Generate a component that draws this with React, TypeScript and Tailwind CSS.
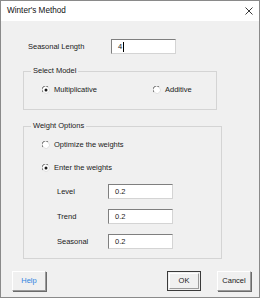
import React from "react";

function Radio({ checked }: { checked: boolean }) {
  return (
    <svg width="8" height="8" viewBox="0 0 8 8" className="shrink-0">
      <circle cx="4" cy="4" r="3.5" fill="#ffffff" />
      <path d="M1 6.2 A3.4 3.4 0 0 1 6.2 1" fill="none" stroke="#6e6e6e" strokeWidth="1" />
      <path d="M6.6 1.8 A3.4 3.4 0 0 1 1.8 6.6" fill="none" stroke="#dedede" strokeWidth="1" />
      {checked && <circle cx="4" cy="4" r="1.5" fill="#1a1a1a" />}
    </svg>
  );
}

function TextBox({ value, width, caret }: { value: string; width: string; caret?: boolean }) {
  return (
    <div
      className={`${width} h-[15px] bg-white border border-t-[#7f7f7f] border-l-[#7f7f7f] border-b-[#d4d4d4] border-r-[#d4d4d4] flex items-center pl-[6px] text-[7.5px] text-[#1a1a1a]`}
    >
      <span>{value}</span>
      {caret && <span className="w-px h-[10px] bg-black ml-[1px]" />}
    </div>
  );
}

function Button({ label, def, blue }: { label: string; def?: boolean; blue?: boolean }) {
  return (
    <div
      className={`w-[34px] h-[20px] flex items-center justify-center text-[7.5px] ${
        def
          ? "border border-[#3a3a3a]"
          : "border border-t-white border-l-white border-b-[#9a9a9a] border-r-[#9a9a9a] shadow-[1px_1px_0_#6b6b6b]"
      } bg-[#f0f0f0] ${blue ? "text-[#2f84e0]" : "text-[#1a1a1a]"}`}
    >
      {def ? (
        <div className="w-[30px] h-[16px] flex items-center justify-center border border-t-white border-l-white border-b-[#9a9a9a] border-r-[#9a9a9a]">
          {label}
        </div>
      ) : (
        label
      )}
    </div>
  );
}

export default function App() {
  return (
    <div
      className="w-[261px] h-[300px] bg-white"
      style={{ fontFamily: '"Liberation Sans", Arial, sans-serif' }}
    >
      <div className="w-[260px] h-[298px] border border-[#8a8a8a] flex flex-col bg-[#f0f0f0]">
        {/* Title bar */}
        <div className="h-[20px] bg-white flex items-center justify-between pl-[6px] pr-[6px]">
          <span className="text-[8.2px] text-[#111]">Winter's Method</span>
          <svg width="8" height="8" viewBox="0 0 8 8">
            <path d="M0.5 0.5 L7.5 7.5 M7.5 0.5 L0.5 7.5" stroke="#222" strokeWidth="0.9" />
          </svg>
        </div>

        {/* Seasonal Length */}
        <div className="mt-[18px] flex items-center pl-[27px]">
          <span className="w-[83px] text-[7.5px] text-[#1a1a1a]">Seasonal Length</span>
          <TextBox value="4" width="w-[65px]" caret />
        </div>

        {/* Select Model */}
        <fieldset className="mt-[12px] ml-[22px] w-[194px] h-[44px] border border-[#d4d4d4] px-0">
          <legend className="ml-[7px] px-[2px] leading-[10px] text-[7.5px] text-[#1a1a1a]">
            Select Model
          </legend>
          <div className="mt-[9px] pl-[18px] flex items-center leading-[10px]">
            <div className="w-[111px] flex items-center gap-[4px]">
              <Radio checked />
              <span className="text-[7.5px] text-[#1a1a1a]">Multiplicative</span>
            </div>
            <div className="flex items-center gap-[4px]">
              <Radio checked={false} />
              <span className="text-[7.5px] text-[#1a1a1a]">Additive</span>
            </div>
          </div>
        </fieldset>

        {/* Weight Options */}
        <fieldset className="mt-[11px] ml-[22px] w-[199px] h-[138px] border border-[#d4d4d4] px-0">
          <legend className="ml-[7px] px-[2px] leading-[10px] text-[7.5px] text-[#1a1a1a]">
            Weight Options
          </legend>
          <div className="mt-[9px] pl-[18px] flex flex-col leading-[10px]">
            <div className="flex items-center gap-[4px]">
              <Radio checked={false} />
              <span className="text-[7.5px] text-[#1a1a1a]">Optimize the weights</span>
            </div>
            <div className="mt-[13px] flex items-center gap-[4px]">
              <Radio checked />
              <span className="text-[7.5px] text-[#1a1a1a]">Enter the weights</span>
            </div>
          </div>
          <div className="mt-[11px] pl-[33px] flex flex-col gap-[10px]">
            {["Level", "Trend", "Seasonal"].map((l) => (
              <div key={l} className="flex items-center">
                <span className="w-[51px] text-[7.5px] text-[#1a1a1a]">{l}</span>
                <TextBox value="0.2" width="w-[65px]" />
              </div>
            ))}
          </div>
        </fieldset>

        {/* Buttons */}
        <div className="mt-[12px] flex items-center pl-[11px] pr-[8px]">
          <Button label="Help" blue />
          <div className="flex-1" />
          <Button label="OK" def />
          <div className="w-[16px]" />
          <Button label="Cancel" />
        </div>
      </div>
    </div>
  );
}
